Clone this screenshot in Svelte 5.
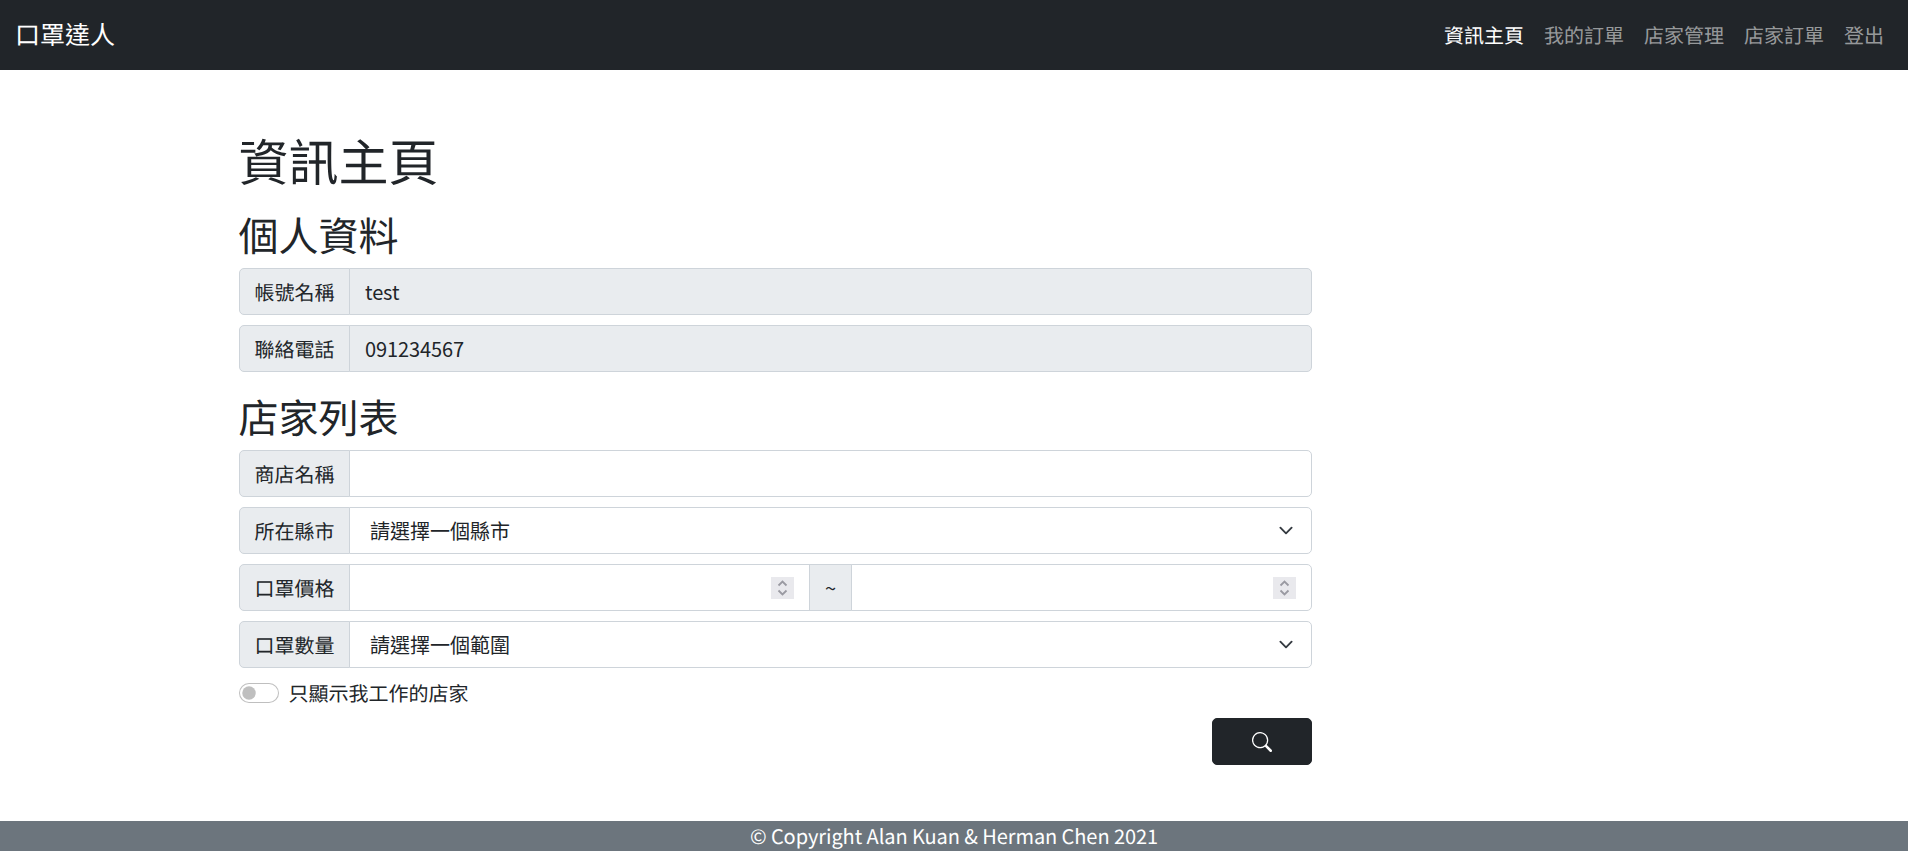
<script>
  const links = ['資訊主頁', '我的訂單', '店家管理', '店家訂單', '登出'];
</script>

<div class="page">
  <nav class="navbar">
    <a class="brand" href="#top">口罩達人</a>
    <ul class="nav">
      {#each links as link, i}
        <li><a class="nav-link" class:active={i === 0} href="#top">{link}</a></li>
      {/each}
    </ul>
  </nav>

  <main class="main">
    <h1>資訊主頁</h1>
    <section class="profile">
      <h2>個人資料</h2>
      <div class="group">
        <span class="label">帳號名稱</span>
        <input class="control" type="text" value="test" disabled />
      </div>
      <div class="group">
        <span class="label">聯絡電話</span>
        <input class="control" type="text" value="091234567" disabled />
      </div>
    </section>
    <section class="stores">
      <h2>店家列表</h2>
      <div class="group">
        <span class="label">商店名稱</span>
        <input class="control" type="text" />
      </div>
      <div class="group">
        <span class="label">所在縣市</span>
        <select class="control select"><option>請選擇一個縣市</option></select>
      </div>
      <div class="group">
        <span class="label">口罩價格</span>
        <input class="control" type="number" />
        <span class="label tilde">~</span>
        <input class="control" type="number" />
      </div>
      <div class="group">
        <span class="label">口罩數量</span>
        <select class="control select"><option>請選擇一個範圍</option></select>
      </div>
      <label class="switch">
        <input type="checkbox" />
        <span>只顯示我工作的店家</span>
      </label>
      <div class="actions">
        <button class="search" type="button" aria-label="搜尋">
          <svg viewBox="0 0 16 16" width="20" height="20" fill="currentColor" aria-hidden="true">
            <path d="M11.742 10.344a6.5 6.5 0 1 0-1.397 1.398h-.001c.03.04.062.078.098.115l3.85 3.85a1 1 0 0 0 1.415-1.414l-3.85-3.85a1.007 1.007 0 0 0-.115-.1zM12 6.5a5.5 5.5 0 1 1-11 0 5.5 5.5 0 0 1 11 0z" />
          </svg>
        </button>
      </div>
    </section>
  </main>

  <footer class="footer">© Copyright Alan Kuan &amp; Herman Chen 2021</footer>
</div>

<style>
  :global(html) { font-size: 20px; }
  :global(body) {
    margin: 0;
    font-family: "Noto Sans CJK TC", "Noto Sans", sans-serif;
    font-size: 20px;
    line-height: 1.5;
    color: #212529;
    background: #fff;
    text-rendering: geometricPrecision;
  }
  .page { min-height: 851px; display: flex; flex-direction: column; }
  .navbar {
    height: 70px;
    box-sizing: border-box;
    background: #212529;
    display: flex;
    align-items: center;
    justify-content: space-between;
    padding: 0 14px 0 15px;
  }
  .brand { color: #fff; font-size: 25px; text-decoration: none; line-height: 37.5px; }
  .nav { display: flex; list-style: none; margin: 0; padding: 0; }
  .nav-link { display: block; padding: 10px; color: rgba(255, 255, 255, .55); text-decoration: none; }
  .nav-link.active { color: #fff; }
  .main {
    flex: 1;
    box-sizing: border-box;
    margin-left: 12.5%;
    width: 56.25%;
    padding-top: 60px;
  }
  h1, h2 { font-weight: 400; line-height: 1.2; margin: 0 0 10px; }
  h1 { font-size: 50px; margin-bottom: 20px; }
  h2 { font-size: 40px; }
  .profile { margin-bottom: 20px; }
  .group { display: flex; align-items: stretch; margin-bottom: 10px; height: 47px; }
  .label {
    display: flex;
    align-items: center;
    box-sizing: border-box;
    padding: 7.5px 14.5px 7.5px 15px;
    background: #e9ecef;
    border: 1px solid #ced4da;
    border-radius: 5px 0 0 5px;
    white-space: nowrap;
  }
  .control {
    flex: 1 1 0;
    min-width: 0;
    box-sizing: border-box;
    margin-left: -1px;
    padding: 7.5px 15px;
    font: inherit;
    color: #212529;
    background: #fff;
    border: 1px solid #ced4da;
    border-radius: 0 5px 5px 0;
    outline: none;
    appearance: auto;
  }
  .control:disabled { background: #e9ecef; opacity: 1; letter-spacing: -.1px; }
  .control[type="number"]::-webkit-inner-spin-button {
    appearance: none;
    align-self: center;
    opacity: 1;
    width: 23px;
    height: 22px;
    margin: 0;
    background: #e9e9ed url("data:image/svg+xml,%3csvg xmlns='http://www.w3.org/2000/svg' viewBox='0 0 23 22'%3e%3cpath fill='none' stroke='%239a9aa2' stroke-width='1.8' d='M7.5 8.5l4-4 4 4M7.5 13.5l4 4 4-4'/%3e%3c/svg%3e") no-repeat center / 23px 22px;
  }
  .control[type="number"]:nth-child(2) { border-radius: 0; }
  .tilde { margin-left: -1px; border-radius: 0; }
  .select {
    appearance: none;
    padding-left: 20px;
    padding-right: 45px;
    background: #fff url("data:image/svg+xml,%3csvg xmlns='http://www.w3.org/2000/svg' viewBox='0 0 16 16'%3e%3cpath fill='none' stroke='%23343a40' stroke-linecap='round' stroke-linejoin='round' stroke-width='2' d='M2 5l6 6 6-6'/%3e%3c/svg%3e") no-repeat right 15px center / 20px 15px;
  }
  .switch { display: flex; align-items: center; gap: 10px; height: 30px; margin-bottom: 2.5px; }
  .switch input {
    appearance: none;
    width: 40px;
    height: 20px;
    margin: 0;
    border: 1px solid rgba(0, 0, 0, .25);
    border-radius: 20px;
    background: #fff url("data:image/svg+xml,%3csvg xmlns='http://www.w3.org/2000/svg' viewBox='-4 -4 8 8'%3e%3ccircle r='3' fill='rgba(0,0,0,.25)'/%3e%3c/svg%3e") no-repeat left center / contain;
  }
  .actions { display: flex; justify-content: flex-end; margin-top: 10px; }
  .search {
    width: 100px;
    height: 47px;
    padding: 0;
    display: flex;
    align-items: center;
    justify-content: center;
    color: #fff;
    background: #212529;
    border: 1px solid #212529;
    border-radius: 5px;
  }
  .footer {
    height: 30px;
    background: #6c757d;
    color: #fff;
    text-align: center;
    line-height: 30px;
    letter-spacing: -.07px;
  }
</style>
